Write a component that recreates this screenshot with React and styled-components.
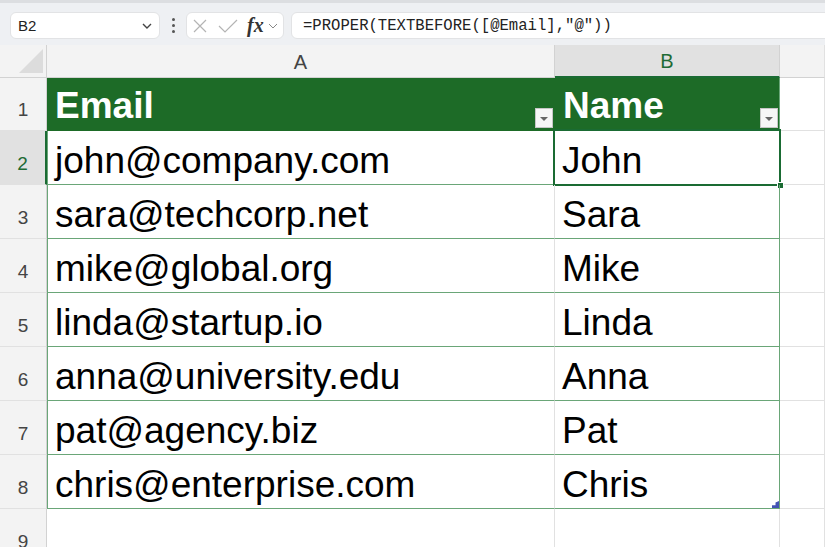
import React from 'react'
import styled, { createGlobalStyle } from 'styled-components'

const GREEN = '#1d6b27'
const TABLE_LINE = '#6aa678'
const GRID = '#e1e1e1'
const HEAD_LINE = '#d2d2d2'
const SELECT = '#1a6b33'

const rows = [
  { email: 'john@company.com', name: 'John' },
  { email: 'sara@techcorp.net', name: 'Sara' },
  { email: 'mike@global.org', name: 'Mike' },
  { email: 'linda@startup.io', name: 'Linda' },
  { email: 'anna@university.edu', name: 'Anna' },
  { email: 'pat@agency.biz', name: 'Pat' },
  { email: 'chris@enterprise.com', name: 'Chris' },
]

function App() {
  return (
    <Page>
      <GlobalStyle />
      <FormulaBar>
        <NameBox>
          <span>B2</span>
          <svg width="10" height="6" viewBox="0 0 10 6">
            <path d="M1 1l4 4 4-4" fill="none" stroke="#444" strokeWidth="1.4" />
          </svg>
        </NameBox>
        <Dots>
          <i />
          <i />
          <i />
        </Dots>
        <FxGroup>
          <svg width="14" height="14" viewBox="0 0 14 14">
            <path d="M1 1l12 12M13 1L1 13" stroke="#b4b4b4" strokeWidth="1.2" />
          </svg>
          <svg width="20" height="14" viewBox="0 0 20 14">
            <path d="M1 7l6 6L19 1" fill="none" stroke="#b4b4b4" strokeWidth="1.2" />
          </svg>
          <FxLabel>fx</FxLabel>
          <svg width="10" height="6" viewBox="0 0 10 6">
            <path d="M1 1l4 4 4-4" fill="none" stroke="#888" strokeWidth="1" />
          </svg>
        </FxGroup>
        <FormulaInput>=PROPER(TEXTBEFORE([@Email],"@"))</FormulaInput>
      </FormulaBar>

      <Sheet>
        <Corner>
          <CornerMark />
        </Corner>
        <ColHeader>A</ColHeader>
        <ColHeader $selected>B</ColHeader>
        <ColHeader $last />

        <RowHeader>1</RowHeader>
        <TableHead>
          <span>Email</span>
          <FilterButton />
        </TableHead>
        <TableHead $last>
          <span>Name</span>
          <FilterButton />
        </TableHead>
        <EmptyCell />

        {rows.map((row, i) => (
          <React.Fragment key={row.email}>
            <RowHeader $selected={i === 0}>{i + 2}</RowHeader>
            <DataCell $col="A">{row.email}</DataCell>
            <DataCell $col="B">
              {row.name}
              {i === 0 && (
                <Selection>
                  <FillHandle />
                </Selection>
              )}
              {i === rows.length - 1 && <ResizeHandle />}
            </DataCell>
            <EmptyCell />
          </React.Fragment>
        ))}

        <RowHeader>9</RowHeader>
        <EmptyCell />
        <EmptyCell />
        <EmptyCell />
      </Sheet>
    </Page>
  )
}

const GlobalStyle = createGlobalStyle`
  html, body {
    margin: 0;
    padding: 0;
    background: #fff;
  }
  body {
    font-family: "Liberation Sans", Arial, sans-serif;
    overflow: hidden;
  }
  * {
    box-sizing: border-box;
  }
`

const Page = styled.div`
  width: 825px;
  height: 547px;
  overflow: hidden;
  display: flex;
  flex-direction: column;
  background: #fff;
`

const FormulaBar = styled.div`
  height: 45px;
  flex: none;
  display: flex;
  align-items: center;
  padding: 3px 0 0 10px;
  background: #eef0f3;
  border-top: 3px solid #dcdee1;
  overflow: hidden;
`

const NameBox = styled.div`
  flex: none;
  width: 150px;
  height: 27px;
  display: flex;
  align-items: center;
  justify-content: space-between;
  padding: 0 7px 0 7px;
  background: #fff;
  border: 1px solid #e2e3e5;
  border-radius: 6px;
  font-size: 15px;
  color: #222;
`

const Dots = styled.div`
  flex: none;
  width: 26px;
  display: flex;
  flex-direction: column;
  align-items: center;
  gap: 3px;

  i {
    width: 3px;
    height: 3px;
    border-radius: 50%;
    background: #555;
  }
`

const FxGroup = styled.div`
  flex: none;
  width: 98px;
  height: 27px;
  display: flex;
  align-items: center;
  gap: 11px;
  padding-left: 6px;
  background: #fff;
  border: 1px solid #e2e3e5;
  border-radius: 6px;

  svg:last-child {
    margin-left: -7px;
  }
`

const FxLabel = styled.span`
  font-family: "Liberation Serif", "Times New Roman", serif;
  font-style: italic;
  font-weight: 700;
  font-size: 20px;
  color: #333;
  margin-left: -2px;
`

const FormulaInput = styled.div`
  flex: none;
  width: 560px;
  height: 27px;
  margin-left: 7px;
  display: flex;
  align-items: center;
  padding-left: 11px;
  background: #fff;
  border: 1px solid #e2e3e5;
  border-radius: 6px;
  font-family: "Liberation Mono", "Courier New", monospace;
  font-size: 15.6px;
  color: #222;
  white-space: nowrap;
`

const Sheet = styled.div`
  flex: 1;
  display: grid;
  grid-template-columns: 47px 508px 225px 1fr;
  grid-template-rows: 33px 53px repeat(8, 54px);
  overflow: hidden;
`

const Corner = styled.div`
  background: #f3f3f3;
  border-right: 1px solid ${HEAD_LINE};
  border-bottom: 1px solid ${HEAD_LINE};
  display: flex;
  align-items: flex-end;
  justify-content: flex-end;
  padding: 0 3px 4px 0;
`

const CornerMark = styled.div`
  width: 24px;
  height: 24px;
  background: #dcdcdc;
  clip-path: polygon(100% 0, 100% 100%, 0 100%);
`

const ColHeader = styled.div`
  display: flex;
  align-items: center;
  justify-content: center;
  padding-top: 2px;
  font-size: 20px;
  color: ${({ $selected }) => ($selected ? '#1e6b35' : '#444')};
  background: ${({ $selected }) => ($selected ? '#e1e1e1' : '#f3f3f3')};
  border-right: 1px solid ${({ $last }) => ($last ? GRID : HEAD_LINE)};
  border-bottom: ${({ $selected }) =>
    $selected ? `2px solid ${SELECT}` : `1px solid ${HEAD_LINE}`};
`

const RowHeader = styled.div`
  display: flex;
  align-items: flex-end;
  justify-content: center;
  padding-bottom: 9px;
  font-size: 19px;
  color: ${({ $selected }) => ($selected ? '#1e6b35' : '#444')};
  background: ${({ $selected }) => ($selected ? '#e1e1e1' : '#f3f3f3')};
  border-right: ${({ $selected }) =>
    $selected ? `2px solid ${SELECT}` : `1px solid ${HEAD_LINE}`};
  border-bottom: 1px solid ${GRID};
`

const TableHead = styled.div`
  display: flex;
  align-items: flex-end;
  justify-content: space-between;
  padding: 0 1px 2px 8px;
  background: ${GREEN};
  color: #fff;
  font-size: 37px;
  font-weight: 700;
  border-right: 1px solid ${({ $last }) => ($last ? TABLE_LINE : GREEN)};
  border-bottom: 1px solid ${GREEN};

  span {
    line-height: 1.15;
    padding-bottom: 0;
  }
`

const FilterButton = styled.div`
  width: 18px;
  height: 20px;
  flex: none;
  display: flex;
  align-items: center;
  justify-content: center;
  background: #f6f6f6;
  border: 1px solid #c6c6c6;

  &::after {
    content: '';
    border-left: 4px solid transparent;
    border-right: 4px solid transparent;
    border-top: 4px solid #666;
    margin-top: 2px;
  }
`

const DataCell = styled.div`
  position: relative;
  display: flex;
  align-items: flex-end;
  padding: 0 0 1px 7px;
  font-size: 37px;
  line-height: 1.15;
  color: #000;
  white-space: nowrap;
  border-left: ${({ $col }) => ($col === 'A' ? `1px solid ${TABLE_LINE}` : 'none')};
  border-right: 1px solid ${({ $col }) => ($col === 'A' ? GRID : TABLE_LINE)};
  border-bottom: 1px solid ${TABLE_LINE};
`

const EmptyCell = styled.div`
  border-right: 1px solid ${GRID};
  border-bottom: 1px solid ${GRID};
`

const Selection = styled.div`
  position: absolute;
  top: -2px;
  left: -2px;
  right: -2px;
  bottom: -2px;
  border: 2px solid ${SELECT};
  pointer-events: none;
`

const FillHandle = styled.div`
  position: absolute;
  right: -5px;
  bottom: -5px;
  width: 7px;
  height: 7px;
  background: ${SELECT};
  border: 1px solid #fff;
`

const ResizeHandle = styled.div`
  position: absolute;
  right: 0;
  bottom: 0;
  width: 7px;
  height: 7px;
  background: #4353b3;
  clip-path: polygon(100% 0, 100% 100%, 0 100%, 0 60%, 50% 60%, 50% 20%);
`

export default App
